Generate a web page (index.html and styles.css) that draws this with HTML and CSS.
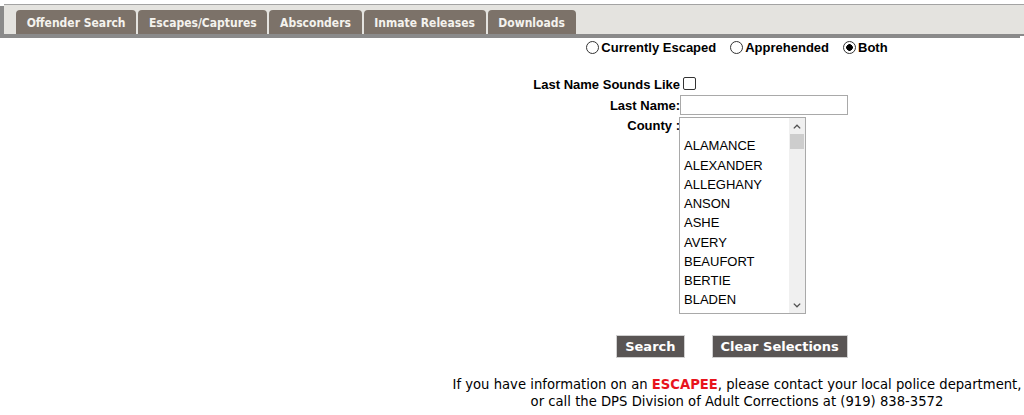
FILE: index.html
```html
<!DOCTYPE html>
<html lang="en">
<head>
    <meta charset="UTF-8">
    <title>Offender Search - Escapes/Captures</title>
    <link rel="stylesheet" href="styles.css">
</head>
<body>
    <div class="tabbar">
        <a class="tab" href="#">Offender Search</a>
        <a class="tab" href="#">Escapes/Captures</a>
        <a class="tab" href="#">Absconders</a>
        <a class="tab" href="#">Inmate Releases</a>
        <a class="tab" href="#">Downloads</a>
    </div>

    <div class="content">
        <div class="status">
            <label><input type="radio" name="status" value="escaped">Currently Escaped</label>
            <label><input type="radio" name="status" value="captured">Apprehended</label>
            <label><input type="radio" name="status" value="both" checked>Both</label>
        </div>

        <div class="form">
            <label class="lbl" for="soundex">Last Name Sounds Like</label>
            <div class="field"><input type="checkbox" id="soundex"></div>

            <label class="lbl" for="lastName">Last Name:</label>
            <div class="field"><input type="text" id="lastName" class="text"></div>

            <label class="lbl lbl-top" for="county">County :</label>
            <div class="field">
                <div class="listbox">
                    <select id="county" class="county" size="10" multiple>
                        <option></option>
                        <option>ALAMANCE</option><option>ALEXANDER</option><option>ALLEGHANY</option>
                        <option>ANSON</option><option>ASHE</option><option>AVERY</option>
                        <option>BEAUFORT</option><option>BERTIE</option><option>BLADEN</option>
                        <option>BRUNSWICK</option><option>BUNCOMBE</option><option>BURKE</option>
                        <option>CABARRUS</option><option>CALDWELL</option><option>CAMDEN</option>
                        <option>CARTERET</option><option>CASWELL</option><option>CATAWBA</option>
                        <option>CHATHAM</option><option>CHEROKEE</option><option>CHOWAN</option>
                        <option>CLAY</option><option>CLEVELAND</option><option>COLUMBUS</option>
                        <option>CRAVEN</option><option>CUMBERLAND</option><option>CURRITUCK</option>
                        <option>DARE</option><option>DAVIDSON</option><option>DAVIE</option>
                        <option>DUPLIN</option><option>DURHAM</option><option>EDGECOMBE</option>
                        <option>FORSYTH</option><option>FRANKLIN</option><option>GASTON</option>
                        <option>GATES</option><option>GRAHAM</option><option>GRANVILLE</option>
                        <option>GREENE</option><option>GUILFORD</option><option>HALIFAX</option>
                        <option>HARNETT</option><option>HAYWOOD</option><option>HENDERSON</option>
                        <option>HERTFORD</option><option>HOKE</option><option>HYDE</option>
                        <option>IREDELL</option><option>JACKSON</option><option>JOHNSTON</option>
                        <option>JONES</option><option>LEE</option><option>LENOIR</option>
                        <option>LINCOLN</option><option>MACON</option><option>MADISON</option>
                        <option>MARTIN</option><option>MCDOWELL</option><option>MECKLENBURG</option>
                        <option>MITCHELL</option><option>MONTGOMERY</option><option>MOORE</option>
                        <option>NASH</option><option>NEW HANOVER</option><option>NORTHAMPTON</option>
                        <option>ONSLOW</option><option>ORANGE</option><option>PAMLICO</option>
                        <option>PASQUOTANK</option><option>PENDER</option><option>PERQUIMANS</option>
                        <option>PERSON</option><option>PITT</option><option>POLK</option>
                        <option>RANDOLPH</option><option>RICHMOND</option><option>ROBESON</option>
                        <option>ROCKINGHAM</option><option>ROWAN</option><option>RUTHERFORD</option>
                        <option>SAMPSON</option><option>SCOTLAND</option><option>STANLY</option>
                        <option>STOKES</option><option>SURRY</option><option>SWAIN</option>
                        <option>TRANSYLVANIA</option><option>TYRRELL</option><option>UNION</option>
                        <option>VANCE</option><option>WAKE</option><option>WARREN</option>
                        <option>WASHINGTON</option><option>WATAUGA</option><option>WAYNE</option>
                        <option>WILKES</option><option>WILSON</option><option>YADKIN</option>
                        <option>YANCEY</option>
                    </select>
                    <div class="scrollbar" aria-hidden="true">
                        <span class="sb-btn">
                            <svg width="8" height="5" viewBox="0 0 8 5"><path d="M0.8 4.4 4 1.2 7.2 4.4" fill="none" stroke="#505050" stroke-width="1.3"/></svg>
                        </span>
                        <span class="sb-thumb"></span>
                        <span class="sb-track"></span>
                        <span class="sb-btn">
                            <svg width="8" height="5" viewBox="0 0 8 5"><path d="M0.8 0.6 4 3.8 7.2 0.6" fill="none" stroke="#505050" stroke-width="1.3"/></svg>
                        </span>
                    </div>
                </div>
            </div>
        </div>

        <div class="buttons">
            <button type="button" class="btn">Search</button>
            <button type="button" class="btn">Clear Selections</button>
        </div>

        <p class="notice">
            If you have information on an <span class="escapee">ESCAPEE</span>, please contact your local police department,<br>
            or call the DPS Division of Adult Corrections at (919) 838-3572
        </p>
    </div>
</body>
</html>
```

FILE: styles.css
```css
body {
    margin: 0;
    padding-top: 4px;
    background: #fff;
    font-family: "Liberation Sans", Arial, sans-serif;
    color: #000;
}
.tabbar {
    display: flex;
    gap: 2px;
    margin-left: 4px;
    padding: 5px 0 0 12px;
    height: 24px;
    background: #e4e3df;
    border-top: 1px solid #a3a3a3;
    border-bottom: 2px solid #8a8a8a;
    box-shadow: -4px 2px 0 0 #8a8a8a;
}
.tab {
    display: block;
    padding: 0 10.7px;
    height: 24px;
    line-height: 26px;
    background: #7c7269;
    color: #f4f2ee;
    text-decoration: none;
    font-family: "DejaVu Sans Condensed", "DejaVu Sans", sans-serif;
    font-weight: bold;
    font-size: 12px;
    border-radius: 4px 4px 0 0;
}
.content {
    margin-left: 450px;
    width: 574px;
}
.status {
    display: flex;
    justify-content: center;
    gap: 14px;
    margin-top: 4px;
    font-size: 13px;
    font-weight: bold;
}
.status label {
    display: flex;
    align-items: center;
}
.status input {
    appearance: none;
    box-sizing: border-box;
    margin: 0 2px 0 0;
    width: 13px;
    height: 13px;
    border: 1px solid #333;
    border-radius: 50%;
    background: #fff;
}
.status input:checked {
    background: radial-gradient(circle, #000 0 3px, #fff 3.6px);
}
.form {
    display: grid;
    grid-template-columns: 150px 170px;
    row-gap: 2px;
    margin: 21px 0 0 80px;
    font-size: 13px;
    font-weight: bold;
}
.lbl {
    text-align: right;
    align-self: center;
}
.lbl-top {
    align-self: start;
    padding-top: 1px;
}
.field input[type=checkbox] {
    appearance: none;
    box-sizing: border-box;
    margin: 1px 0 0 3px;
    width: 13px;
    height: 13px;
    border: 1px solid #333;
    border-radius: 2px;
    background: #fff;
}
.text {
    box-sizing: border-box;
    width: 168px;
    height: 20px;
    margin: 0;
    border: 1px solid #a9a9a9;
}
.listbox {
    display: flex;
    box-sizing: border-box;
    width: 127px;
    height: 197px;
    margin-left: -1px;
    border: 1px solid #a9a9a9;
    background: #fff;
    overflow: hidden;
}
.county {
    flex: 1;
    min-width: 0;
    height: 100%;
    margin: 0;
    padding: 0;
    border: none;
    outline: none;
    overflow: hidden;
    scrollbar-width: none;
    font-family: "Liberation Sans", Arial, sans-serif;
    font-size: 13px;
    font-weight: normal;
    color: #000;
}
.county option {
    min-height: 15.25px;
    padding: 1px 4px 3px;
    line-height: 15.25px;
}
.scrollbar {
    display: flex;
    flex-direction: column;
    flex-shrink: 0;
    width: 16px;
    background: #f0f0f0;
}
.sb-btn {
    display: flex;
    align-items: center;
    justify-content: center;
    height: 16px;
}
.sb-thumb {
    height: 15px;
    margin: 0 1px;
    background: #cdcdcd;
}
.sb-track {
    flex: 1;
}
.buttons {
    display: flex;
    justify-content: center;
    gap: 27px;
    margin: 21px 0 0 -10px;
}
.btn {
    background: #595554;
    color: #fff;
    border: 1px solid #d0d0d0;
    padding: 0 8px;
    height: 23px;
    font-family: "DejaVu Sans", sans-serif;
    font-weight: bold;
    font-size: 13px;
    cursor: pointer;
}
.notice {
    margin: 18px 0 0;
    text-align: center;
    white-space: nowrap;
    font-family: "DejaVu Sans", sans-serif;
    font-size: 13.2px;
    line-height: 17px;
}
.escapee {
    color: #e8141d;
    font-weight: bold;
}
```
